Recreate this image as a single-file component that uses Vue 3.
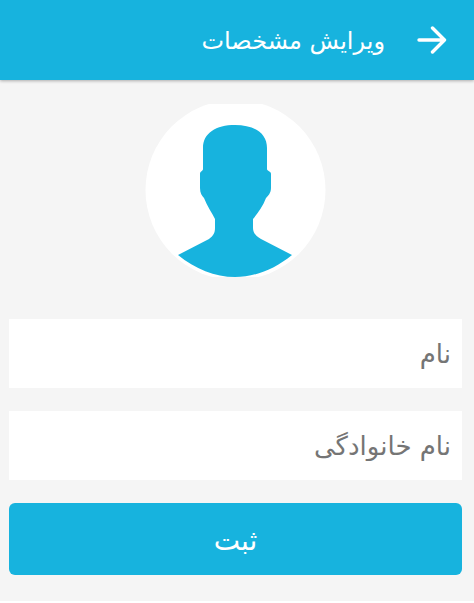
<script setup>
const fields = ['نام', 'نام خانوادگی']
</script>

<template>
  <div class="page" dir="rtl">
    <header class="bar">
      <svg class="back" viewBox="0 0 30 28" aria-hidden="true">
        <path d="M2 14H27.5M15.5 2L27.5 14L15.5 26" />
      </svg>
      <h1 class="title">ویرایش مشخصات</h1>
    </header>
    <main class="content">
      <svg class="avatar" viewBox="145 104 181 173" aria-hidden="true">
        <circle cx="235.5" cy="190" r="90" fill="#ffffff" />
        <path class="person" d="M235 125C254 125 267 133 267 148V169C267 171 271 171 271 174V188C271 193 268 196 266 198C263 206 258 213 253 219V228C253 233 256 236 261 239L292 255C275 269 255 277 235 277C215 277 195 269 178 255L209 239C213 236 215 233 215 228V219C212 213 207 206 204 198C202 196 200 193 200 188V174C200 171 203 171 203 169V148C203 133 216 125 235 125Z" />
      </svg>
      <input v-for="f in fields" :key="f" class="field" type="text" :placeholder="f" />
      <button class="submit" type="button">ثبت</button>
    </main>
  </div>
</template>

<style scoped>
.page {
  width: 474px;
  height: 601px;
  background: #f5f5f5;
  font-family: "DejaVu Sans", sans-serif;
  display: flex;
  flex-direction: column;
}
.bar {
  height: 80px;
  flex: none;
  background: #17b3de;
  box-shadow: 0 1px 3px rgba(0, 0, 0, 0.3);
  display: flex;
  align-items: center;
  padding: 0 27px 0 0;
  gap: 32px;
  color: #fff;
}
.back {
  width: 30px;
  height: 28px;
  flex: none;
  fill: none;
  stroke: #fff;
  stroke-width: 3.4;
  stroke-linecap: round;
  stroke-linejoin: round;
}
.title {
  margin: 0;
  padding-top: 2px;
  font-size: 24px;
  font-weight: 400;
}
.content {
  display: flex;
  flex-direction: column;
  padding: 24px 12px 0 9px;
}
.avatar {
  width: 181px;
  height: 173px;
  align-self: flex-start;
  margin: 0 136px 42px 0;
}
.person {
  fill: #17b3de;
}
.field {
  height: 68.5px;
  border: 0;
  outline: 0;
  padding: 2px 11px 0;
  margin-bottom: 23.5px;
  background: #fff;
  font-family: inherit;
  font-size: 26px;
  box-sizing: border-box;
}
.field::placeholder {
  color: #757575;
  opacity: 1;
}
.submit {
  height: 72px;
  border: 0;
  border-radius: 6px;
  padding: 2px 0 0;
  background: #17b3de;
  color: #fff;
  font-family: inherit;
  font-size: 28px;
}
</style>

<style>
html, body { background: #fff; }
</style>
